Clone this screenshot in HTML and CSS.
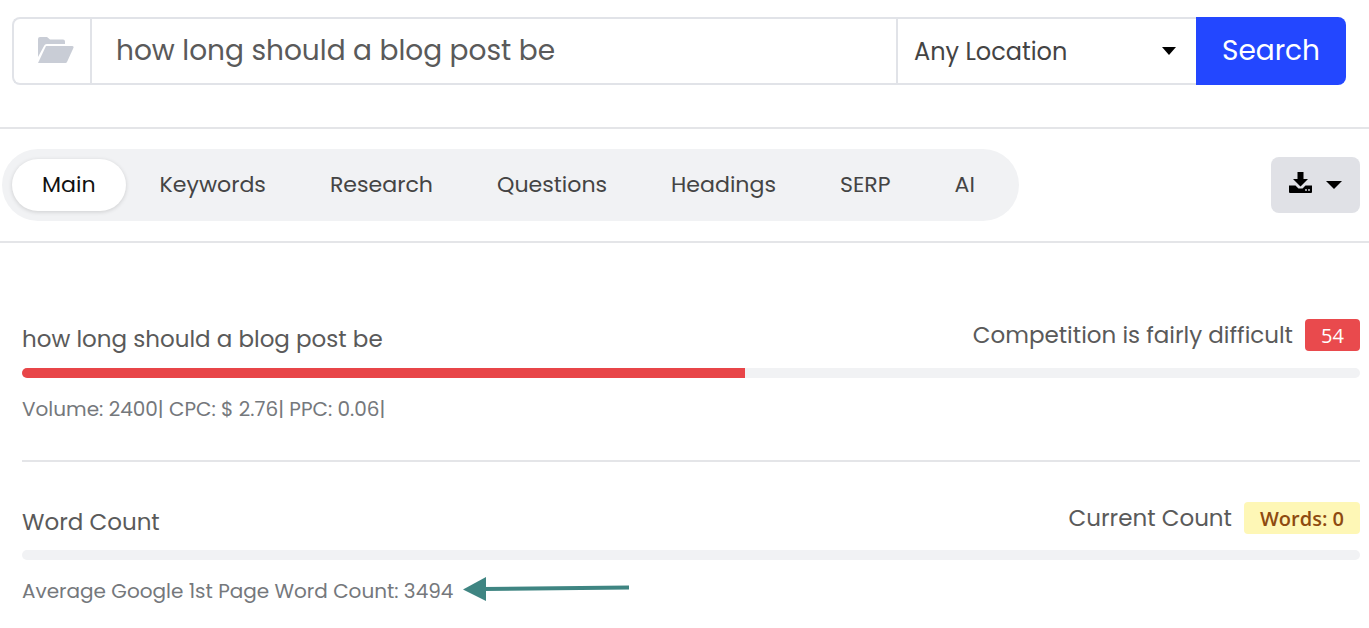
FILE: index.html
```html
<!DOCTYPE html>
<html lang="en">
<head>
<meta charset="utf-8">
<title>Keyword</title>
<link rel="stylesheet" href="styles.css">
</head>
<body>
<div class="searchbar">
  <div class="folder"><svg width="36" height="26" viewBox="0 0 36 26"><path fill="#c9cdd6" d="M0 2a2 2 0 0 1 2-2h7l3 2.500h13a2 2 0 0 1 2 2V7H9a3 3 0 0 0-3 2L0 20z"/><path fill="#c9cdd6" d="M8 9h26a1.500 1.500 0 0 1 1.400 2L29 25a2 2 0 0 1-1.500 1H0z"/></svg></div>
  <div class="query">how long should a blog post be</div>
  <div class="location"><span>Any Location</span><i class="caret"></i></div>
  <button class="search">Search</button>
</div>
<hr class="rule rule-top">
<div class="tabrow">
  <nav class="tabs">
    <a class="tab active">Main</a><a class="tab">Keywords</a><a class="tab">Research</a><a class="tab">Questions</a><a class="tab">Headings</a><a class="tab">SERP</a><a class="tab">AI</a>
  </nav>
  <button class="export"><svg class="export-icon" width="23" height="21" viewBox="0 0 23 21"><path fill="#000" d="M8.500 0h6v7H19l-7.500 7.500L4 7h4.500z"/><path fill="#000" d="M0 13.500h6.500l3 3h4l3-3H23V20a1 1 0 0 1-1 1H1a1 1 0 0 1-1-1z"/><circle cx="17" cy="18" r=".9" fill="#e0e1e6"/><circle cx="20" cy="18" r=".9" fill="#e0e1e6"/></svg><i class="caret wide"></i></button>
</div>
<hr class="rule rule-tabs">
<section class="metric first">
  <div class="metric-head"><h2>how long should a blog post be</h2><div class="status"><span>Competition is fairly difficult</span><b class="badge red">54</b></div></div>
  <div class="track"><div class="fill" style="width:54%"></div></div>
  <p class="note">Volume: 2400| CPC: $ 2.76| PPC: 0.06|</p>
</section>
<hr class="rule rule-inner">
<section class="metric second">
  <div class="metric-head"><h2>Word Count</h2><div class="status"><span>Current Count</span><b class="badge yellow">Words: 0</b></div></div>
  <div class="track"></div>
  <div class="note-row"><p class="note">Average Google 1st Page Word Count: 3494</p>
  <svg class="arrow" width="166" height="24" viewBox="0 0 166 24"><path d="M20 12L166 10.500" stroke="#3f8582" stroke-width="4" fill="none"/><path d="M0 12.500L23 0v24z" fill="#3f8582"/></svg></div>
</section>
</body>
</html>
```
FILE: styles.css
```css
*{box-sizing:border-box}
html,body{margin:0;padding:0;background:#fff;overflow:hidden}
body{font-family:Poppins,"Open Sans","Noto Sans",sans-serif;color:#5a5a5a;height:628px}
.searchbar{display:flex;height:68px;margin:17px 23px 0 12px}
.folder{width:78px;display:flex;align-items:center;justify-content:center;padding:0 0 2px 8px;border:2px solid #e1e3e8;border-right:0;border-radius:8px 0 0 8px}
.query{flex:1;display:flex;align-items:center;padding-left:24px;border:2px solid #e1e3e8;border-right:0;font-size:28px;color:#5a5a5a}
.location{width:300px;display:flex;align-items:center;justify-content:space-between;padding:0 20px 0 16px;border:2px solid #e1e3e8;border-right:0;font-size:24px;color:#444}
.caret{display:block;width:0;height:0;border-left:7px solid transparent;border-right:7px solid transparent;border-top:8px solid #000}
.caret.wide{border-left-width:8px;border-right-width:8px}
.search{width:150px;background:#2347ff;color:#fff;border:0;border-radius:0 8px 8px 0;font:inherit;font-size:28px}
.rule{border:0;height:2px;background:#e4e5e8;margin:0}
.rule-top{margin-top:42px}
.tabrow{display:flex;justify-content:space-between;align-items:center;padding:20px 9px 20px 2px}
.tabs{display:flex;align-items:center;height:72px;width:1017px;background:#f1f2f4;border-radius:36px;padding:0 10px 2px}
.tab{height:52px;display:flex;align-items:center;padding:0 32px;font-size:22.100px;color:#444}
.tab.active{background:#fff;color:#111;border-radius:26px;padding:0 30px 2px;margin:2px 2px 0 0;box-shadow:0 1px 4px rgba(0,0,0,.15)}
.export{width:89px;height:56px;display:flex;align-items:center;justify-content:center;gap:14px;background:#e0e1e6;border:0;border-radius:8px}
.export-icon{margin-top:-5px}
.metric{padding:0 9px 0 22px}
.metric.first{padding-top:76px}
.metric-head{display:flex;justify-content:space-between;align-items:flex-end}
h2{margin:0;font-size:23px;font-weight:400;color:#5a5a5a;line-height:34px}
.status{display:flex;align-items:center;gap:12px;font-size:23px;margin-bottom:3px}
.first .status{height:34px;align-items:flex-start}
.first .status span{line-height:32.500px}
.badge{height:32px;display:flex;align-items:center;border-radius:4px;font-weight:600;padding:0 16px;font-family:"Open Sans",sans-serif}
.red{background:#e94a4d;color:#fff;width:55px;justify-content:center;font-size:20px;font-weight:400}
.yellow{background:#fef7b6;color:#8e4b10;font-size:20px}
.track{height:10px;background:#f1f2f4;border-radius:5px;margin-top:12px;overflow:hidden}
.fill{height:100%;background:#e84548}
.note{margin:0;font-size:20px;color:#75787c;line-height:30px}
.metric .note{margin-top:16px}
.note-row{display:flex;align-items:center}
.arrow{margin:12px 0 0 10px}
.rule-inner{margin:36px 9px 0 22px}
.metric.second{padding-top:39px}
.second h2{margin-bottom:-1px}
```
